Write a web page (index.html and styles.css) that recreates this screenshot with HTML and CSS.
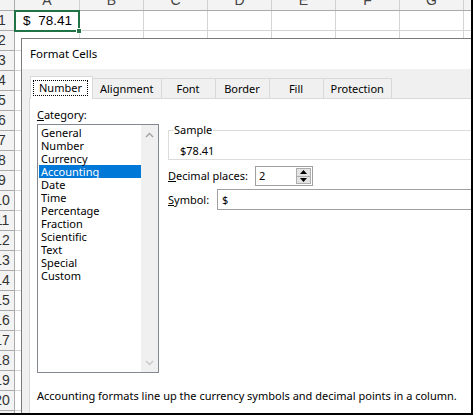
FILE: index.html
```html
<!DOCTYPE html>
<html>
<head>
<meta charset="utf-8">
<link rel="stylesheet" href="styles.css">
</head>
<body>
<div class="sheet">
  <div class="hrow">
    <div class="rh"></div>
    <div class="ch ca">A</div><div class="ch">B</div><div class="ch">C</div><div class="ch">D</div><div class="ch">E</div><div class="ch">F</div><div class="ch">G</div><div class="ch"></div>
  </div>
  <div class="row"><div class="rh">1</div><div class="c ca a1"><span>$</span><span>78.41</span></div><div class="c"></div><div class="c"></div><div class="c"></div><div class="c"></div><div class="c"></div><div class="c"></div><div class="c"></div></div>
  <div class="row"><div class="rh">2</div><div class="c ca"></div><div class="c"></div><div class="c"></div><div class="c"></div><div class="c"></div><div class="c"></div><div class="c"></div><div class="c"></div></div>
  <div class="row"><div class="rh">3</div><div class="c ca"></div></div>
  <div class="row"><div class="rh">4</div><div class="c ca"></div></div>
  <div class="row"><div class="rh">5</div><div class="c ca"></div></div>
  <div class="row"><div class="rh">6</div><div class="c ca"></div></div>
  <div class="row"><div class="rh">7</div><div class="c ca"></div></div>
  <div class="row"><div class="rh">8</div><div class="c ca"></div></div>
  <div class="row"><div class="rh">9</div><div class="c ca"></div></div>
  <div class="row"><div class="rh">10</div><div class="c ca"></div></div>
  <div class="row"><div class="rh">11</div><div class="c ca"></div></div>
  <div class="row"><div class="rh">12</div><div class="c ca"></div></div>
  <div class="row"><div class="rh">13</div><div class="c ca"></div></div>
  <div class="row"><div class="rh">14</div><div class="c ca"></div></div>
  <div class="row"><div class="rh">15</div><div class="c ca"></div></div>
  <div class="row"><div class="rh">16</div><div class="c ca"></div></div>
  <div class="row"><div class="rh">17</div><div class="c ca"></div></div>
  <div class="row"><div class="rh">18</div><div class="c ca"></div></div>
  <div class="row"><div class="rh">19</div><div class="c ca"></div></div>
  <div class="row"><div class="rh">20</div><div class="c ca"></div></div>
  <div class="row"><div class="rh">21</div><div class="c ca"></div></div>
</div>
<div class="sel"><div class="handle"></div></div>

<div class="dialog">
  <div class="title">Format Cells</div>
  <div class="dbody">
    <div class="tabs">
      <div class="tab active"><span class="focus">Number</span></div>
      <div class="tab">Alignment</div>
      <div class="tab">Font</div>
      <div class="tab">Border</div>
      <div class="tab">Fill</div>
      <div class="tab">Protection</div>
    </div>
    <div class="panel">
      <div class="cols">
        <div class="left">
          <div class="lbl"><u>C</u>ategory:</div>
          <div class="list">
            <div class="items">
              <div class="item">General</div>
              <div class="item">Number</div>
              <div class="item">Currency</div>
              <div class="item selected">Accounting</div>
              <div class="item">Date</div>
              <div class="item">Time</div>
              <div class="item">Percentage</div>
              <div class="item">Fraction</div>
              <div class="item">Scientific</div>
              <div class="item">Text</div>
              <div class="item">Special</div>
              <div class="item">Custom</div>
            </div>
            <div class="sbar">
              <svg width="17" height="12" viewBox="0 0 17 12"><polyline points="5,8 8.5,4.5 12,8" fill="none" stroke="#a3a3a3" stroke-width="1.4"/></svg>
              <svg width="17" height="12" viewBox="0 0 17 12"><polyline points="5,4 8.5,7.5 12,4" fill="none" stroke="#c8c8c8" stroke-width="1.4"/></svg>
            </div>
          </div>
        </div>
        <div class="right">
          <fieldset class="group">
            <legend>Sample</legend>
            <div class="sample">$78.41</div>
          </fieldset>
          <div class="frow dec">
            <div class="flbl"><u>D</u>ecimal places:</div>
            <div class="spin">
              <div class="sval">2</div>
              <div class="sbtns">
                <div class="sbtn"><svg width="7" height="4" viewBox="0 0 7 4"><polygon points="0,4 3.5,0 7,4" fill="#000"/></svg></div>
                <div class="sbtn"><svg width="7" height="4" viewBox="0 0 7 4"><polygon points="0,0 3.5,4 7,0" fill="#000"/></svg></div>
              </div>
            </div>
          </div>
          <div class="frow sym">
            <div class="flbl slbl"><u>S</u>ymbol:</div>
            <div class="combo">$</div>
          </div>
        </div>
      </div>
      <div class="desc">Accounting formats line up the currency symbols and decimal points in a column.</div>
    </div>
  </div>
</div>
</body>
</html>
```

FILE: styles.css
```css
html, body {
  margin: 0;
  padding: 0;
}
body {
  width: 473px;
  height: 415px;
  box-sizing: border-box;
  border-right: 2px solid #000;
  border-bottom: 2px solid #000;
  position: relative;
  overflow: hidden;
  background: #fff;
  font-family: "Noto Sans", "Open Sans", sans-serif;
}
.sheet {
  display: flex;
  flex-direction: column;
  margin-top: -10px;
  font-family: "Liberation Sans", Arial, sans-serif;
}
.hrow, .row {
  display: flex;
  flex: none;
}
.hrow {
  height: 21px;
  box-sizing: border-box;
  border-bottom: 1px solid #ababab;
  background: #f3f3f3;
}
.row {
  height: 20px;
  box-sizing: border-box;
  border-bottom: 1px solid #d4d4d4;
}
.rh {
  width: 25px;
  margin-left: -10px;
  flex: none;
  box-sizing: border-box;
  border-right: 1px solid #ababab;
  background: #f3f3f3;
  color: #333;
  font-size: 14px;
  line-height: 19px;
  text-align: center;
}
.row .rh {
  border-bottom: 1px solid #ababab;
  margin-bottom: -1px;
  height: 20px;
}
.ch {
  width: 64px;
  flex: none;
  box-sizing: border-box;
  border-right: 1px solid #d0d0d0;
  color: #444;
  font-size: 14px;
  line-height: 20px;
  text-align: center;
}
.ch.ca {
  width: 65px;
}
.c {
  width: 64px;
  flex: none;
  box-sizing: border-box;
  border-right: 1px solid #d4d4d4;
}
.c.ca {
  width: 65px;
}
.row .a1 {
  display: flex;
  justify-content: space-between;
  align-items: center;
  padding: 0 7px 0 8px;
  font-size: 13.5px;
  color: #000;
  font-family: "Liberation Sans", Arial, sans-serif;
}
.sel {
  position: absolute;
  left: 14px;
  top: 10px;
  width: 66px;
  height: 22px;
  box-sizing: border-box;
  border: 2px solid #217346;
}
.handle {
  position: absolute;
  right: -4px;
  bottom: -4px;
  width: 6px;
  height: 6px;
  background: #217346;
  border: 1px solid #fff;
  box-sizing: border-box;
}

.dialog {
  position: absolute;
  left: 21px;
  top: 38px;
  right: 0;
  bottom: 0;
  box-sizing: border-box;
  border-left: 1px solid #7a7a7a;
  border-top: 1px solid #7a7a7a;
  background: #fff;
  display: flex;
  flex-direction: column;
  font-size: 11px;
  color: #000;
}
.title {
  height: 30px;
  flex: none;
  padding-left: 8px;
  font-size: 11.5px;
  line-height: 30px;
  background: #fff;
}
.dbody {
  flex: 1;
  background: #f0f0f0;
  padding: 9px 0 0 7px;
  display: flex;
  flex-direction: column;
  min-height: 0;
}
.tabs {
  display: flex;
  align-items: flex-end;
  height: 20px;
  flex: none;
}
.tab {
  height: 20px;
  box-sizing: border-box;
  min-width: 54px;
  padding: 0 7px;
  border-top: 1px solid #d9d9d9;
  border-right: 1px solid #d9d9d9;
  text-align: center;
  line-height: 19px;
  background: #f0f0f0;
}
.tab.active {
  height: 23px;
  margin-bottom: -1px;
  margin-left: 1px;
  border-left: 1px solid #d9d9d9;
  background: #fff;
  position: relative;
  z-index: 1;
  padding: 3px 4px 0 2px;
  line-height: 15px;
}
.focus {
  display: inline-block;
  border: 1px dotted #000;
  padding: 0 5px;
  line-height: 14px;
}
.panel {
  flex: 1;
  background: #fff;
  border-top: 1px solid #d9d9d9;
  border-left: 1px solid #d9d9d9;
  padding: 9px 0 0 7px;
  min-height: 0;
}
.cols {
  display: flex;
  gap: 9px;
}
.left {
  width: 122px;
  flex: none;
}
.lbl {
  line-height: 14px;
  margin-bottom: 2px;
}
.list {
  height: 249px;
  box-sizing: border-box;
  border: 1px solid #828790;
  display: flex;
}
.items {
  flex: 1;
  padding-top: 1px;
}
.item {
  height: 13px;
  line-height: 13px;
  padding-left: 2px;
  margin-left: 1px;
}
.item.selected {
  background: #0078d7;
  color: #fff;
}
.sbar {
  width: 17px;
  flex: none;
  background: #f0f0f0;
  display: flex;
  flex-direction: column;
  justify-content: space-between;
  padding: 4px 0 3px;
}
.sbar svg {
  display: block;
}
.right {
  flex: 1;
  margin-right: -10px;
  padding-top: 15px;
}
.group {
  margin: 0;
  padding: 0;
  border: 1px solid #dcdcdc;
  border-right: none;
  min-width: 0;
}
.group legend {
  padding: 0 1px;
  margin-left: 4px;
  line-height: 14px;
}
.sample {
  line-height: 14px;
  padding: 7px 0 1px 11px;
}
.frow {
  display: flex;
  align-items: center;
}
.dec {
  margin-top: 6px;
}
.sym {
  margin-top: 3px;
}
.flbl {
  width: 87px;
  flex: none;
  line-height: 14px;
}
.slbl {
  width: 49px;
}
.spin {
  width: 58px;
  height: 20px;
  box-sizing: border-box;
  border: 1px solid #a0a0a0;
  display: flex;
  align-items: stretch;
}
.sval {
  flex: 1;
  padding-left: 3px;
  line-height: 18px;
}
.sbtns {
  width: 15px;
  display: flex;
  flex-direction: column;
  padding: 1px 1px 1px 0;
}
.sbtn {
  flex: 1;
  background: #e3e3e3;
  border: 1px solid #adadad;
  display: flex;
  align-items: center;
  justify-content: center;
}
.sbtn + .sbtn {
  border-top: none;
}
.sbtn svg {
  display: block;
}
.combo {
  flex: 1;
  height: 21px;
  box-sizing: border-box;
  border: 1px solid #a0a0a0;
  padding-left: 4px;
  line-height: 19px;
}
.desc {
  margin-top: 16px;
  line-height: 14px;
  white-space: nowrap;
}
```
